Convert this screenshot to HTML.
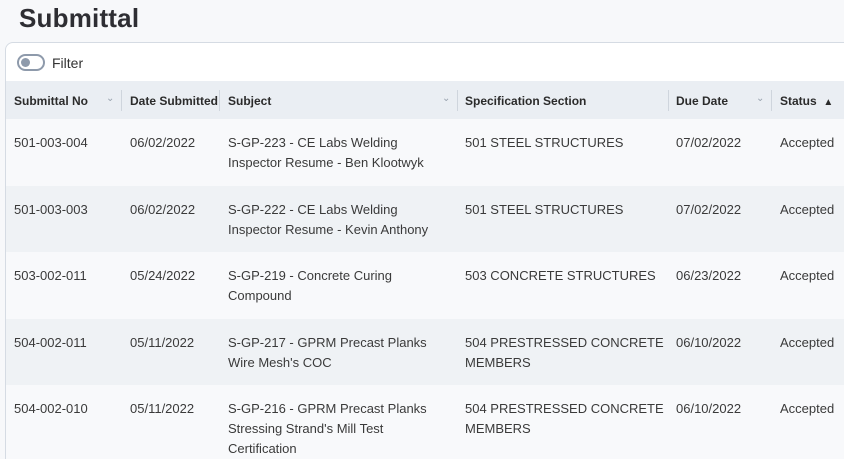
<!DOCTYPE html>
<html><head><style>
*{margin:0;padding:0;box-sizing:border-box}
html,body{width:844px;height:459px;overflow:hidden}
body{background:#f7f8fa;font-family:"Liberation Sans",sans-serif;color:#3a3a3a;position:relative}
h1{position:absolute;left:19px;top:3px;font-size:26px;font-weight:bold;color:#2e2e33;letter-spacing:0.2px}
.card{position:absolute;left:5px;top:42px;width:850px;height:430px;border:1px solid #d5dbe3;border-radius:8px;background:#fff;overflow:hidden}
.tog{position:absolute;left:11px;top:11px;width:28px;height:17px;border:2px solid #8e9aab;border-radius:9px}
.tog:after{content:"";position:absolute;left:2px;top:2px;width:9px;height:9px;border-radius:50%;background:#8e9aab}
.flt{position:absolute;left:46px;top:12px;font-size:14px;color:#333}
.row{position:absolute;left:0;width:850px;font-size:13px;line-height:20px}
.hdr{top:38px;height:38px;background:#eaeef3;font-weight:bold;font-size:12px;color:#2b2b2b}
.c{position:absolute}
.hdr .c{top:13px;line-height:14px}
.sep{position:absolute;top:9px;width:1px;height:21px;background:#cfd5dd}
.chev{position:absolute;top:8px;font-size:10px;color:#98a2ae;font-weight:normal}
.r .c{top:14px}
</style></head><body>
<h1>Submittal</h1>
<div class="card">
<div class="tog"></div><div class="flt">Filter</div>
<div class="row hdr">
<div class="c" style="left:8px">Submittal No</div><div class="chev" style="left:100px">&#8964;</div><div class="sep" style="left:115px"></div>
<div class="c" style="left:124px">Date Submitted</div><div class="sep" style="left:213px"></div>
<div class="c" style="left:222px">Subject</div><div class="chev" style="left:436px">&#8964;</div><div class="sep" style="left:451px"></div>
<div class="c" style="left:459px">Specification Section</div><div class="sep" style="left:662px"></div>
<div class="c" style="left:670px">Due Date</div><div class="chev" style="left:750px">&#8964;</div><div class="sep" style="left:765px"></div>
<div class="c" style="left:774px">Status &nbsp;<span style="font-size:10px">&#9650;</span></div>
</div>
<div class="row r" style="top:76px;height:67px;background:#f8f9fb">
<div class="c" style="left:8px">501-003-004</div><div class="c" style="left:124px">06/02/2022</div><div class="c" style="left:222px">S-GP-223 - CE Labs Welding<br>Inspector Resume - Ben Klootwyk</div><div class="c" style="left:459px">501 STEEL STRUCTURES</div><div class="c" style="left:670px">07/02/2022</div><div class="c" style="left:774px">Accepted</div></div>
<div class="row r" style="top:143px;height:66px;background:#eff2f5">
<div class="c" style="left:8px">501-003-003</div><div class="c" style="left:124px">06/02/2022</div><div class="c" style="left:222px">S-GP-222 - CE Labs Welding<br>Inspector Resume - Kevin Anthony</div><div class="c" style="left:459px">501 STEEL STRUCTURES</div><div class="c" style="left:670px">07/02/2022</div><div class="c" style="left:774px">Accepted</div></div>
<div class="row r" style="top:209px;height:67px;background:#f8f9fb">
<div class="c" style="left:8px">503-002-011</div><div class="c" style="left:124px">05/24/2022</div><div class="c" style="left:222px">S-GP-219 - Concrete Curing<br>Compound</div><div class="c" style="left:459px">503 CONCRETE STRUCTURES</div><div class="c" style="left:670px">06/23/2022</div><div class="c" style="left:774px">Accepted</div></div>
<div class="row r" style="top:276px;height:66px;background:#eff2f5">
<div class="c" style="left:8px">504-002-011</div><div class="c" style="left:124px">05/11/2022</div><div class="c" style="left:222px">S-GP-217 - GPRM Precast Planks<br>Wire Mesh's COC</div><div class="c" style="left:459px">504 PRESTRESSED CONCRETE<br>MEMBERS</div><div class="c" style="left:670px">06/10/2022</div><div class="c" style="left:774px">Accepted</div></div>
<div class="row r" style="top:342px;height:90px;background:#f8f9fb">
<div class="c" style="left:8px">504-002-010</div><div class="c" style="left:124px">05/11/2022</div><div class="c" style="left:222px">S-GP-216 - GPRM Precast Planks<br>Stressing Strand's Mill Test<br>Certification</div><div class="c" style="left:459px">504 PRESTRESSED CONCRETE<br>MEMBERS</div><div class="c" style="left:670px">06/10/2022</div><div class="c" style="left:774px">Accepted</div></div>
</div>
</body></html>
